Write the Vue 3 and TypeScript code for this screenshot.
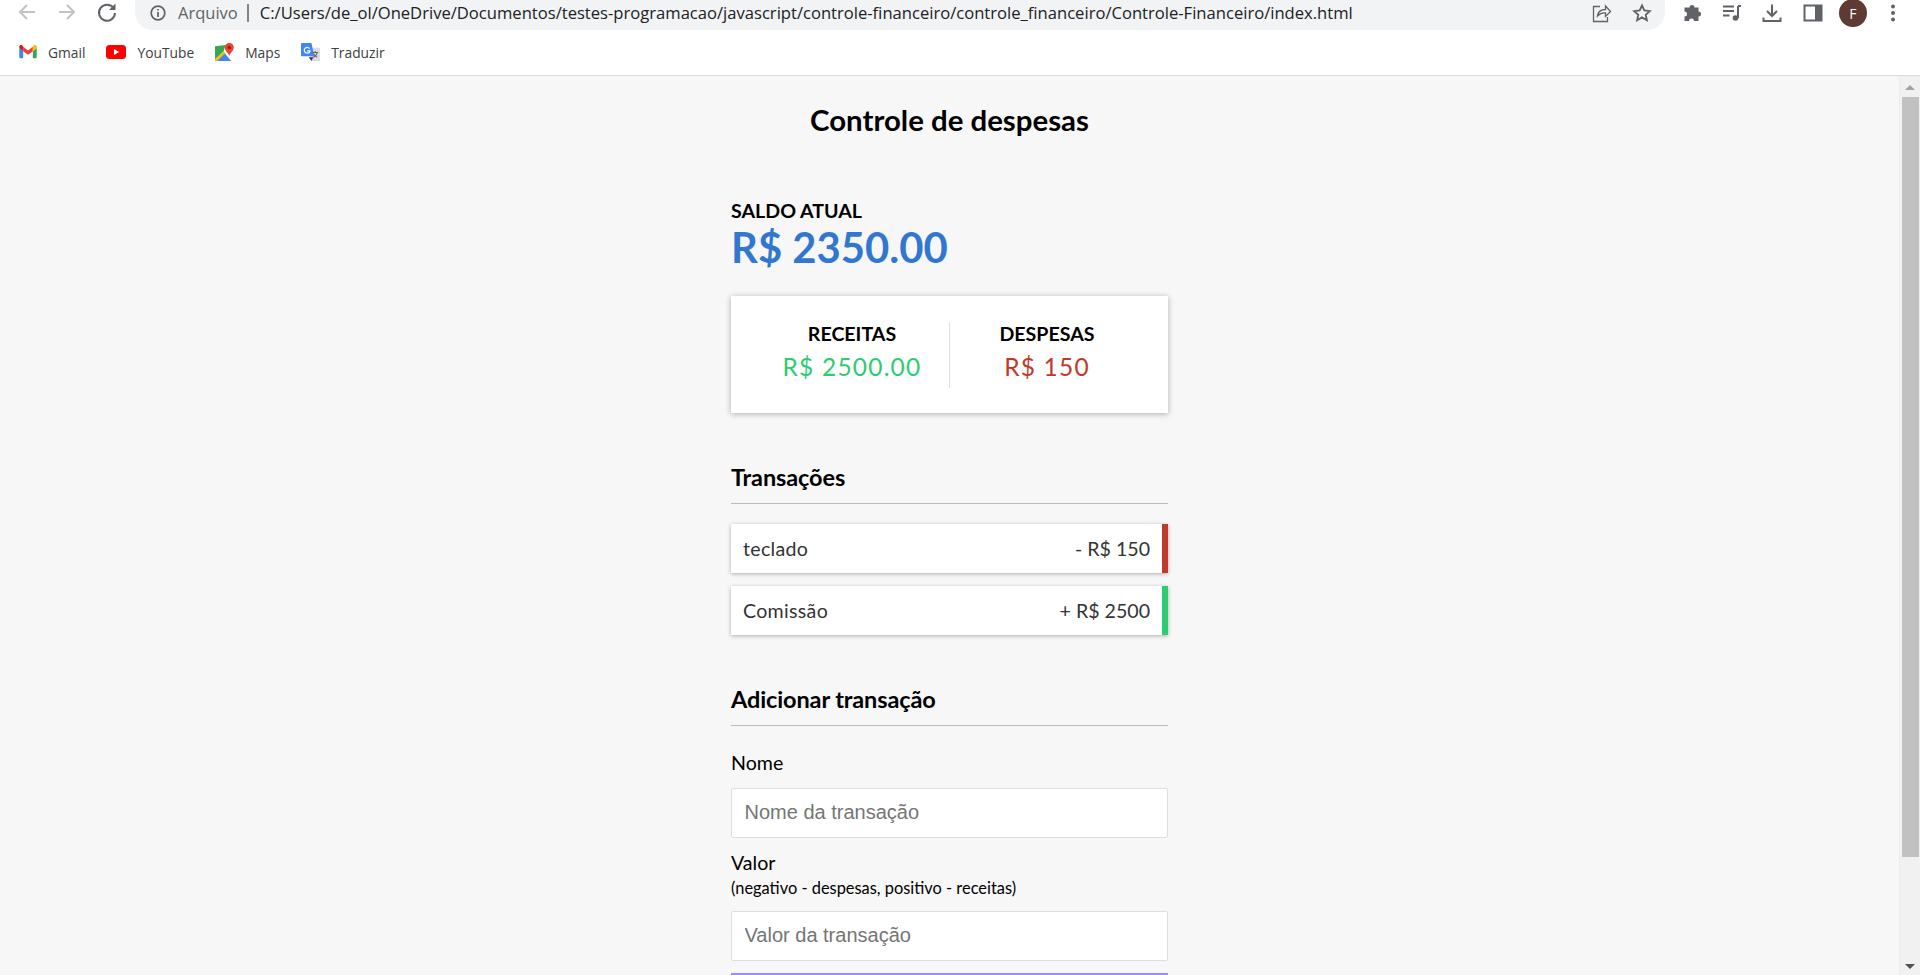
<script setup lang="ts">
interface Transaction {
  name: string
  amount: string
  kind: 'minus' | 'plus'
}

const transactions: Transaction[] = [
  { name: 'teclado', amount: '- R$ 150', kind: 'minus' },
  { name: 'Comissão', amount: '+ R$ 2500', kind: 'plus' },
]

const url =
  'C:/Users/de_ol/OneDrive/Documentos/testes-programacao/javascript/controle-financeiro/controle_financeiro/Controle-Financeiro/index.html'
</script>

<template>
  <div class="window">
    <header class="browser">
      <div class="toolbar">
        <div class="nav">
          <svg class="nav-icon off" viewBox="0 0 24 24"><path d="M20 12H5M12 5l-7 7 7 7" /></svg>
          <svg class="nav-icon off" viewBox="0 0 24 24"><path d="M4 12h15M12 5l7 7-7 7" /></svg>
          <svg class="nav-icon" viewBox="0 0 24 24"><path d="M18.5 8A8 8 0 1 0 20 13" /><path class="solid" d="M20.5 3.5v6.5H14z" /></svg>
        </div>
        <div class="omnibox">
          <svg class="info" viewBox="0 0 18 18">
            <circle cx="9" cy="9" r="6.8" />
            <path d="M9 8v5M9 5v1.6" />
          </svg>
          <span class="scheme">Arquivo</span>
          <span class="sep"></span>
          <span class="url">{{ url }}</span>
          <svg class="omni-icon share" viewBox="0 0 20 20">
            <path d="M8 3.5H1.5v15h14V14" />
            <path d="M5.5 13c.5-4 3.500-6.500 8-6.500V3l5 5.500-5 5V10c-3.500-.3-6 .8-8 3z" />
          </svg>
          <svg class="omni-icon star" viewBox="0 0 20 20">
            <path d="M10 2.500l2.300 5 5.500.6-4.100 3.700 1.200 5.400-4.900-2.800-4.900 2.800 1.200-5.400L2.200 8.100l5.500-.6z" />
          </svg>
        </div>
        <div class="actions">
          <svg class="action" viewBox="0 0 20 20"><path class="solid" d="M7.500 4.500a2.500 2.500 0 0 1 5 0H16.500v4a2.500 2.500 0 0 1 0 5v4.500H12a2.500 2.500 0 0 0-5 0H2.500v-4.500a2.500 2.500 0 0 0 0-5v-4z" /></svg>
          <svg class="action" viewBox="0 0 20 20">
            <path d="M1 3.500h11M1 8h11M1 12.500h6.500" />
            <path d="M16 3v12" />
            <path d="M16 3h3" />
            <circle class="solid" cx="13.500" cy="15" r="2.800" />
          </svg>
          <svg class="action" viewBox="0 0 20 20"><path d="M10 1.500v11M5 8l5 5 5-5M1.500 14.500v3.500h17v-3.500" /></svg>
          <svg class="action" viewBox="0 0 20 20"><rect x="1.500" y="2.500" width="17" height="15" /><rect class="solid" x="12" y="2.500" width="6.500" height="15" /></svg>
          <span class="avatar">F</span>
          <svg class="action dots" viewBox="0 0 20 20"><circle class="solid" cx="10" cy="3.500" r="2" /><circle class="solid" cx="10" cy="10" r="2" /><circle class="solid" cx="10" cy="16.500" r="2" /></svg>
        </div>
      </div>
      <nav class="bookmarks">
        <a class="bookmark">
          <svg class="mark" viewBox="0 0 20 16">
            <path fill="#4285f4" d="M1 15h3.500V7L0 3.500V13.500C0 14.300.5 15 1 15z" />
            <path fill="#34a853" d="M15.500 15H19c.6 0 1-.7 1-1.500V3.500L15.500 7z" />
            <path fill="#ea4335" d="M4.500 7V2L10 6.200 15.500 2v5L10 11.200z" />
            <path fill="#fbbc04" d="M15.500 2v5L20 3.500V2c0-1.800-2-2.700-3.300-1.700z" />
            <path fill="#c5221f" d="M0 3.500L4.500 7V2L3.300.3C2 -.7 0 .2 0 2z" />
          </svg>
          <span>Gmail</span>
        </a>
        <a class="bookmark">
          <svg class="mark yt" viewBox="0 0 20 14">
            <rect width="20" height="14" rx="3.500" fill="#f00" />
            <path fill="#fff" d="M8 4l5.200 3L8 10z" />
          </svg>
          <span>YouTube</span>
        </a>
        <a class="bookmark">
          <svg class="mark maps" viewBox="0 0 20 20">
            <path fill="#34a853" d="M0 3.500L11 2 9 9 0 17z" />
            <path fill="#fbbc04" d="M0 17l9-8 2 2-9 8H0z" />
            <path fill="#4285f4" d="M2 19l8.500-8 6.500 8z" />
            <path fill="#ea4335" d="M15 0a4.800 4.800 0 0 1 4.800 4.800c0 3.200-3.400 5.200-4.800 8.700-1.400-3.500-4.800-5.500-4.800-8.700A4.800 4.800 0 0 1 15 0z" />
            <circle cx="15" cy="4.800" r="1.700" fill="#a50e0e" />
          </svg>
          <span>Maps</span>
        </a>
        <a class="bookmark">
          <svg class="mark tr" viewBox="0 0 20 20">
            <path fill="#dadce0" d="M7 5h12c.6 0 1 .4 1 1v12c0 .6-.4 1-1 1h-8z" />
            <path fill="#4285f4" d="M1 0h10l3 14H1c-.6 0-1-.4-1-1V1c0-.6.4-1 1-1z" />
            <path fill="none" stroke="#fff" stroke-width="1.300" d="M9 6a3 3 0 1 0 .4 2.400H6.500" />
            <path fill="none" stroke="#5f6368" stroke-width="1.100" d="M12 10h6M15 8.500V10M17 10c-.5 2.500-2.500 4.500-4.500 5M13.500 11.500c.5 1.500 2 3 3.500 3.500" />
            <path fill="#3c4043" d="M8 15h5l-2 4z" />
          </svg>
          <span>Traduzir</span>
        </a>
      </nav>
    </header>

    <div class="viewport">
      <main class="page">
        <h2 class="title">Controle de despesas</h2>
        <div class="container">
          <h4 class="balance-label">SALDO ATUAL</h4>
          <h1 class="balance">R$ 2350.00</h1>

          <section class="summary">
            <div class="summary-col">
              <h4>RECEITAS</h4>
              <p class="money plus">R$ 2500.00</p>
            </div>
            <div class="summary-col">
              <h4>DESPESAS</h4>
              <p class="money minus">R$ 150</p>
            </div>
          </section>

          <h3 class="section-title">Transações</h3>
          <ul class="transactions">
            <li v-for="item in transactions" :key="item.name" :class="item.kind">
              <span class="item-name">{{ item.name }}</span>
              <span>{{ item.amount }}</span>
            </li>
          </ul>

          <h3 class="section-title add">Adicionar transação</h3>
          <form class="form" @submit.prevent>
            <label for="name">Nome</label>
            <input id="name" type="text" placeholder="Nome da transação" />
            <label for="amount" class="amount-label">Valor <br /><small>(negativo - despesas, positivo - receitas)</small></label>
            <input id="amount" type="text" placeholder="Valor da transação" />
            <button type="submit" aria-label="Adicionar"></button>
          </form>
        </div>
      </main>
      <aside class="scrollbar" aria-hidden="true">
        <span class="arrow up"></span>
        <span class="thumb"></span>
        <span class="arrow down"></span>
      </aside>
    </div>
  </div>
</template>

<style>
html,
body {
  margin: 0;
  overflow: hidden;
}
</style>

<style scoped>
.window {
  width: 1920px;
  height: 975px;
  display: flex;
  flex-direction: column;
  overflow: hidden;
  background: #f7f7f7;
}

.browser {
  flex: none;
  height: 76px;
  box-sizing: border-box;
  background: #fff;
  border-bottom: 1px solid #dadce0;
  font-family: "Open Sans", sans-serif;
  color: #3c4043;
}

.toolbar {
  height: 30px;
  display: flex;
  align-items: flex-start;
}

.nav {
  width: 135px;
  flex: none;
  height: 24px;
  display: flex;
  align-items: center;
  gap: 16px;
  padding-left: 15px;
  box-sizing: border-box;
}

.nav-icon {
  width: 24px;
  height: 24px;
  fill: none;
  stroke: #5f6368;
  stroke-width: 2;
}

.nav-icon.off {
  stroke: #c1c3c6;
}

.nav-icon .solid {
  fill: #5f6368;
  stroke: none;
}

.omnibox {
  width: 1530px;
  height: 30px;
  flex: none;
  display: flex;
  align-items: center;
  box-sizing: border-box;
  padding: 0 13px 5px 14px;
  background: #f1f3f4;
  border-radius: 0 0 18px 18px;
  font-size: 16.500px;
}

.info {
  width: 18px;
  height: 18px;
  fill: none;
  stroke: #5f6368;
  stroke-width: 1.700;
}

.scheme {
  margin-left: 11px;
  color: #5f6368;
}

.sep {
  width: 2px;
  height: 18px;
  margin: 0 11px 0 9px;
  background: #80868b;
}

.url {
  flex: 1;
  color: #202124;
  white-space: nowrap;
  font-size: 16.600px;
}

.omni-icon {
  width: 20px;
  height: 20px;
  fill: none;
  stroke: #5f6368;
  stroke-width: 1.300;
}

.omni-icon.star {
  margin-left: 20px;
  stroke-width: 1.800;
}

.actions {
  flex: 1;
  height: 26px;
  display: flex;
  align-items: center;
  gap: 20.200px;
  padding-left: 17px;
}

.action {
  width: 20px;
  height: 20px;
  flex: none;
  fill: none;
  stroke: #5f6368;
  stroke-width: 2;
}

.action .solid {
  fill: #5f6368;
  stroke: none;
}

.avatar {
  width: 28px;
  height: 28px;
  margin: 0 -4px;
  flex: none;
  border-radius: 50%;
  display: flex;
  align-items: center;
  justify-content: center;
  background: #5d3a32;
  color: #fff;
  font-size: 14px;
}

.bookmarks {
  height: 45px;
  display: flex;
  align-items: center;
  gap: 21px;
  padding: 0 0 1px 19px;
  box-sizing: border-box;
  font-size: 13.800px;
}

.bookmark {
  display: flex;
  align-items: center;
  gap: 11px;
}

.mark {
  width: 18px;
  height: 14px;
}

.mark.yt {
  width: 20px;
}

.mark.maps,
.mark.tr {
  width: 19px;
  height: 19px;
}

.viewport {
  flex: 1;
  min-height: 0;
  display: flex;
}

.page {
  flex: 1;
  min-width: 0;
  overflow: hidden;
  font-family: Lato, sans-serif;
  color: #000;
}

.title {
  margin: 0;
  padding-top: 26px;
  text-align: center;
  font-size: 29.400px;
  line-height: 36px;
  font-weight: 700;
}

.container {
  width: 437px;
  margin: 61px auto 0;
}

.balance-label {
  margin: 0;
  font-size: 19.600px;
  line-height: 24px;
  font-weight: 700;
}

.balance {
  margin: 0;
  font-size: 41.800px;
  line-height: 48px;
  font-weight: 700;
  color: #3277cf;
}

.summary {
  height: 117px;
  margin-top: 25px;
  box-sizing: border-box;
  display: flex;
  align-items: center;
  padding: 0 24px;
  background: #fff;
  box-shadow: 0 1.200px 6px rgba(0, 0, 0, 0.3);
}

.summary-col {
  flex: 1;
  height: 66px;
  text-align: center;
}

.summary-col:first-child {
  border-right: 1px solid #dedede;
}

.summary-col h4 {
  margin: 0;
  font-size: 19.600px;
  line-height: 24px;
  font-weight: 700;
}

.money {
  margin: 6px 0 0;
  font-size: 24.500px;
  line-height: 30px;
  letter-spacing: 1.200px;
}

.money.plus {
  color: #2ecc71;
}

.money.minus {
  color: #c0392b;
}

.section-title {
  margin: 50px 0 0;
  padding-bottom: 11px;
  border-bottom: 1px solid #bbb;
  font-size: 23.500px;
  line-height: 29px;
  font-weight: 700;
  letter-spacing: -0.120px;
}

.transactions {
  list-style: none;
  margin: 20px 0 0;
  padding: 0;
}

.transactions li {
  height: 49px;
  margin-bottom: 13px;
  box-sizing: border-box;
  display: flex;
  align-items: center;
  justify-content: space-between;
  padding: 0 12px;
  background: #fff;
  color: #333;
  font-size: 19.600px;
  box-shadow: 0 1.200px 4px rgba(0, 0, 0, 0.3);
}

.item-name {
  letter-spacing: 0.300px;
}

.transactions li.minus {
  border-right: 6px solid #c0392b;
}

.transactions li.plus {
  border-right: 6px solid #2ecc71;
}

.section-title.add {
  margin-top: 50px;
}

.form {
  display: flex;
  flex-direction: column;
  padding-top: 25px;
}

.form label {
  font-size: 19.600px;
  line-height: 24px;
  display: block;
}

.form small {
  font-size: 16.400px;
  line-height: 23px;
  display: inline-block;
}

.amount-label {
  margin-top: 13px;
}

.form input {
  height: 50px;
  margin-top: 13px;
  box-sizing: border-box;
  padding: 0 12.500px 2px;
  border: 1px solid #dedede;
  border-radius: 2px;
  background: #fff;
  font-family: "Liberation Sans", sans-serif;
  font-size: 20px;
}

.form .amount-label + input {
  margin-top: 12px;
}

.form input::placeholder {
  color: #757575;
}

.form button {
  height: 50px;
  margin-top: 12px;
  border: 0;
  background: #9c88ff;
}

.scrollbar {
  flex: none;
  width: 21px;
  display: flex;
  flex-direction: column;
  align-items: center;
  background: #f1f1f1;
  border-left: 1px solid #ececec;
  box-sizing: border-box;
}

.thumb {
  width: 17px;
  height: 760px;
  margin-top: 7px;
  background: #c1c1c1;
}

.arrow {
  width: 0;
  height: 0;
  border-left: 5px solid transparent;
  border-right: 5px solid transparent;
}

.arrow.up {
  margin-top: 9px;
  border-bottom: 5px solid #a3a3a3;
}

.arrow.down {
  margin-top: auto;
  margin-bottom: 6px;
  border-top: 5px solid #505050;
}
</style>
